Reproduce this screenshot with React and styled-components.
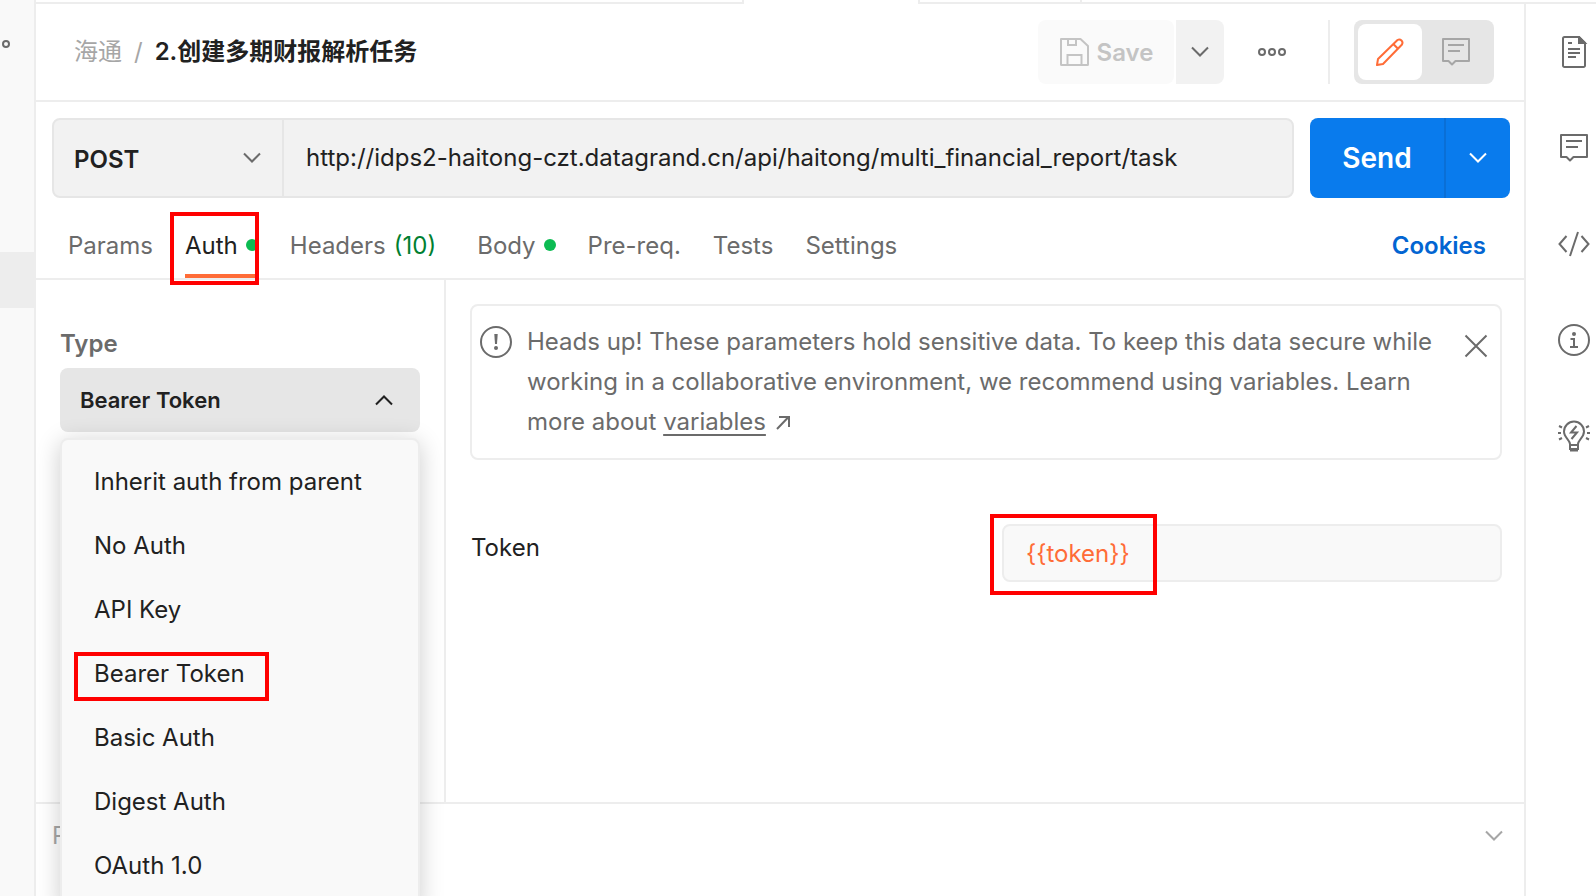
import React from 'react';
import styled, { createGlobalStyle, css } from 'styled-components';

const c = {
  text: '#212121',
  muted: '#6b6b6b',
  faint: '#a6a6a6',
  disabled: '#c4c4c4',
  line: '#ededed',
  lineStrong: '#e6e6e6',
  panel: '#f9f9f9',
  field: '#f2f2f2',
  orange: '#ff6c37',
  green: '#0cbb52',
  greenText: '#007f31',
  blue: '#097bed',
  link: '#0265d2',
  mark: '#ff0000',
};

const Global = createGlobalStyle`
  *, *::before, *::after { box-sizing: border-box; }
  body { margin: 0; background: #fff; }
  body, button, input, select {
    font-family: Inter, "Noto Sans CJK SC", "Liberation Sans", sans-serif;
    font-size: 24px;
    color: ${c.text};
  }
  button, select { cursor: pointer; }
  svg { display: block; flex: none; }
`;

const Shell = styled.div`
  display: flex;
  height: 100vh;
  overflow: hidden;
`;

const LeftRail = styled.aside`
  flex: none;
  width: 36px;
  border-right: 2px solid ${c.line};
  background: ${c.panel};
`;

const RailTop = styled.div`
  height: 252px;
  padding: 39px 1px;
  color: ${c.muted};
`;

const RailSelected = styled.div`
  height: 56px;
  background: ${c.line};
`;

const Workspace = styled.div`
  flex: 1;
  min-width: 0;
  display: flex;
  flex-direction: column;
`;

const TabStrip = styled.div`
  flex: none;
  display: flex;
  height: 4px;
`;

const StripCell = styled.div`
  ${(p) => (p.$width ? `width: ${p.$width}px;` : 'flex: 1;')}
  ${(p) => !p.$open && `border-bottom: 2px solid ${c.line};`}
  ${(p) => p.$left && `border-left: 2px solid ${c.line};`}
  ${(p) => p.$right && `border-right: 2px solid ${c.line};`}
`;

const Columns = styled.div`
  flex: 1;
  min-height: 0;
  display: flex;
`;

const Main = styled.main`
  flex: 1;
  min-width: 0;
  display: flex;
  flex-direction: column;
`;

const RightRail = styled.nav`
  flex: none;
  width: 72px;
  padding: 32px 6px 0 32px;
  border-left: 2px solid ${c.line};
  display: flex;
  flex-direction: column;
  gap: 64px;
`;

const IconButton = styled.button`
  display: flex;
  align-items: center;
  justify-content: center;
  width: 32px;
  height: 32px;
  padding: 0;
  border: 0;
  background: none;
  color: ${c.muted};
`;

const Header = styled.header`
  flex: none;
  display: flex;
  align-items: center;
  height: 98px;
  padding: 0 30px 0 38px;
  border-bottom: 2px solid ${c.line};
`;

const Crumbs = styled.h1`
  flex: 1;
  display: flex;
  gap: 12px;
  margin: 0;
  font-size: 24px;
  font-weight: 600;
  line-height: 32px;
`;

const Crumb = styled.span`
  color: ${c.faint};
  font-weight: 400;
`;

const SplitButton = styled.div`
  display: flex;
  gap: 2px;
  height: 64px;
`;

const SaveButton = styled.button`
  display: flex;
  align-items: center;
  justify-content: center;
  gap: 8px;
  width: 136px;
  padding: 0;
  border: 0;
  border-radius: 8px;
  background: #fafafa;
  color: ${c.disabled};
  font-weight: 600;
`;

const SaveMenuButton = styled.button`
  display: flex;
  align-items: center;
  justify-content: center;
  width: 48px;
  padding: 0;
  border: 0;
  border-radius: 0 8px 8px 0;
  background: ${c.field};
  color: ${c.muted};
`;

const MoreWrap = styled.div`
  display: flex;
  justify-content: center;
  width: 96px;
`;

const Divider = styled.div`
  width: 2px;
  height: 64px;
  margin: 0 24px 0 8px;
  background: ${c.line};
`;

const Toggle = styled.div`
  display: flex;
  width: 140px;
  height: 64px;
  padding: 4px;
  border-radius: 8px;
  background: ${c.lineStrong};
`;

const ToggleButton = styled.button`
  display: flex;
  align-items: center;
  justify-content: center;
  flex: 1 0 64px;
  max-width: ${(p) => (p.$active ? '64px' : 'none')};
  padding: 0;
  border: 0;
  border-radius: 8px;
  background: ${(p) => (p.$active ? '#fff' : 'transparent')};
  color: ${(p) => (p.$active ? c.orange : c.faint)};
`;

const RequestRow = styled.div`
  flex: none;
  display: flex;
  gap: 16px;
  padding: 16px 14px 14px 16px;
`;

const UrlBar = styled.div`
  flex: 1;
  display: flex;
  height: 80px;
  border: 2px solid ${c.lineStrong};
  border-radius: 8px;
  background: ${c.field};
  overflow: hidden;
`;

const MethodBox = styled.div`
  flex: none;
  display: grid;
  align-items: center;
  width: 230px;
  border-right: 2px solid ${c.lineStrong};
  color: ${c.muted};

  > * { grid-area: 1 / 1; }
  > svg { justify-self: end; margin-right: 18px; pointer-events: none; }
`;

const MethodSelect = styled.select`
  appearance: none;
  height: 100%;
  padding: 2px 20px 0;
  border: 0;
  background: none;
  font-weight: 600;
`;

const UrlInput = styled.input`
  flex: 1;
  min-width: 0;
  padding: 0 22px 2px;
  border: 0;
  background: none;
  outline: none;
`;

const SendGroup = styled.div`
  flex: none;
  display: flex;
  width: 200px;
  border-radius: 8px;
  background: ${c.blue};
  overflow: hidden;
`;

const SendButton = styled.button`
  flex: 1;
  padding: 0;
  border: 0;
  background: none;
  color: #fff;
  font-size: 28px;
  font-weight: 600;
`;

const SendMenuButton = styled.button`
  display: flex;
  align-items: center;
  justify-content: center;
  width: 66px;
  padding: 0;
  border: 0;
  border-left: 2px solid #0a6fd6;
  background: none;
  color: #fff;
`;

const Tabs = styled.nav`
  flex: none;
  display: flex;
  height: 68px;
  padding: 0 38px 0 32px;
  border-bottom: 2px solid ${c.line};
`;

const TabList = styled.div`
  flex: 1;
  display: flex;
  gap: 32px;
`;

const Tab = styled.button`
  position: relative;
  display: flex;
  align-items: center;
  gap: 8px;
  padding: 4px 0 0;
  border: 0;
  border-bottom: 4px solid ${(p) => (p.$active ? c.orange : 'transparent')};
  background: none;
  color: ${(p) => (p.$active ? c.text : c.muted)};
  white-space: nowrap;
`;

const Dot = styled.span`
  width: 12px;
  height: 12px;
  border-radius: 50%;
  background: ${c.green};
`;

const Count = styled.span`
  padding-right: 9px;
  color: ${c.greenText};
`;

const TextLink = styled.a`
  align-self: center;
  color: ${c.link};
  font-weight: 600;
  text-decoration: none;
`;

const Mark = styled.span`
  position: absolute;
  z-index: 3;
  border: 4px solid ${c.mark};
  pointer-events: none;
  ${(p) => p.$kind === 'tab' && css`inset: 0 -1px -11px -15px;`}
  ${(p) => p.$kind === 'option' && css`top: 10px; left: 12px; width: 195px; height: 49px;`}
  ${(p) => p.$kind === 'field' && css`top: -10px; left: -12px; width: 167px; height: 81px;`}
`;

const AuthArea = styled.section`
  flex: 1;
  min-height: 0;
  display: flex;
`;

const TypePane = styled.div`
  flex: none;
  width: 410px;
  padding: 48px 24px 0;
  border-right: 2px solid ${c.line};
`;

const TypeLabel = styled.div`
  height: 40px;
  color: ${c.muted};
  font-weight: 600;
  line-height: 32px;
`;

const Picker = styled.div`
  position: relative;
`;

const PickerButton = styled.button`
  display: flex;
  align-items: center;
  justify-content: space-between;
  width: 100%;
  height: 64px;
  padding: 0 24px 0 20px;
  border: 0;
  border-radius: 8px;
  background: ${c.lineStrong};
  font-size: 22px;
  font-weight: 600;
`;

const Menu = styled.ul`
  position: absolute;
  top: 70px;
  left: 0;
  right: 0;
  z-index: 2;
  margin: 0;
  padding: 10px 0;
  border: 2px solid ${c.line};
  border-radius: 8px;
  background: ${c.panel};
  box-shadow: 0 4px 24px rgba(0, 0, 0, 0.2);
  list-style: none;
`;

const Option = styled.li`
  position: relative;
  height: 64px;
  padding: 0 32px;
  line-height: 64px;
`;

const DetailPane = styled.div`
  flex: 1;
  min-width: 0;
  padding: 24px 22px 0 24px;
`;

const Notice = styled.div`
  display: flex;
  padding: 16px 8px 16px;
  border: 2px solid ${c.line};
  border-radius: 8px;
  color: ${c.muted};
  line-height: 40px;

  > svg { margin-top: 4px; }
  > button { margin-top: 8px; }
`;

const NoticeText = styled.p`
  flex: 1;
  margin: 0 19px 0 15px;
`;

const VariablesLink = styled.a`
  color: inherit;
  text-decoration: underline;
  text-decoration-thickness: 2px;
  text-decoration-skip-ink: none;
  text-underline-offset: 4px;
`;

const InlineArrow = styled.svg`
  && { display: inline-block; margin-left: 10px; }
`;

const TokenRow = styled.div`
  display: grid;
  grid-template-columns: 1fr 1fr;
  gap: 32px;
  margin-top: 64px;
`;

const TokenLabel = styled.label`
  padding-left: 1px;
  line-height: 48px;
`;

const TokenField = styled.div`
  position: relative;
`;

const TokenInput = styled.input`
  display: block;
  width: 100%;
  height: 58px;
  padding: 0 22px;
  border: 2px solid ${c.line};
  border-radius: 8px;
  background: ${c.panel};
  color: ${c.orange};
  outline: none;
`;

const ResponseBar = styled.footer`
  flex: none;
  display: flex;
  align-items: flex-start;
  justify-content: space-between;
  height: 94px;
  padding: 16px 18px 0 16px;
  border-top: 2px solid ${c.line};
  color: ${c.faint};
  line-height: 32px;

  > svg { margin-top: 4px; }
`;

const Svg = ({ size = 32, children }) => (
  <svg width={size} height={size} viewBox={`0 0 ${size} ${size}`} fill="none" stroke="currentColor" strokeWidth="2" aria-hidden="true">
    {children}
  </svg>
);

const Chevron = ({ up }) => (
  <Svg size={24}><path d={up ? 'M4 16.5 12 8.5l8 8' : 'M4 7.5l8 8 8-8'} /></Svg>
);

const SaveIcon = () => (
  <Svg size={30}>
    <path d="M2 2h19.500L29 9v18.500a.5.5 0 0 1-.5.5h-26a.5.5 0 0 1-.5-.5z" strokeLinejoin="round" />
    <path d="M9 2v6h8V2M8.500 28V18h14v10" />
  </Svg>
);

const PencilIcon = () => (
  <Svg>
    <path d="M3 29 4 23 23.500 4a3.300 3.300 0 0 1 4.500 4.500L9 28z" strokeLinejoin="round" />
    <path d="M19.300 8l5 5" />
  </Svg>
);

const CommentIcon = () => (
  <Svg>
    <path d="M3 3h26v22H15.500L12 28.500 8.500 25H3z" strokeLinejoin="round" />
    <path d="M8 9h16M8 15h12" />
  </Svg>
);

const DocIcon = () => (
  <Svg>
    <path d="M6.500 1H21l6 6v22.500a1.500 1.500 0 0 1-1.500 1.500h-19A1.500 1.500 0 0 1 5 29.500v-27A1.500 1.500 0 0 1 6.500 1z" />
    <path d="M21 1v6h6z" fill="currentColor" />
    <path d="M10 7h4M10 13h12M10 17h12M10 21h8" />
  </Svg>
);

const CodeIcon = () => (
  <Svg>
    <path d="M8.500 8 1.500 16l7 8M23.500 8l7 8-7 8M20 4l-8 24" />
  </Svg>
);

const InfoIcon = () => (
  <Svg>
    <circle cx="16" cy="16" r="15" />
    <circle cx="16" cy="10" r="2" fill="currentColor" stroke="none" />
    <path d="M12.500 15H16v8M12 23h8" />
  </Svg>
);

const BulbIcon = () => (
  <Svg>
    <path d="M12 29v-5C12 20 6 17.500 6 11.500a10 10 0 0 1 20 0c0 6-6 8.500-6 12.500v5zM12 25h8" />
    <path d="M12 30.500h8M0 13h3M29 13h3M1 6l3 1.500M31 6l-3 1.500M1 19.500 4 18M31 19.500 28 18" />
    <path d="M18.500 6 13 12.500h6L13.500 19" />
  </Svg>
);

const AlertIcon = () => (
  <Svg>
    <circle cx="16" cy="16" r="15" />
    <path d="M14.300 8h3.400l-.7 10h-2z" fill="currentColor" stroke="none" />
    <circle cx="16" cy="22" r="2" fill="currentColor" stroke="none" />
  </Svg>
);

const authTypes = [
  'Inherit auth from parent',
  'No Auth',
  'API Key',
  'Bearer Token',
  'Basic Auth',
  'Digest Auth',
  'OAuth 1.0',
];

const railItems = [
  ['Documentation', DocIcon],
  ['Comments', CommentIcon],
  ['Code', CodeIcon],
  ['Info', InfoIcon],
  ['Related requests', BulbIcon],
];

export default function App() {
  return (
    <>
      <Global />
      <Shell>
        <LeftRail>
          <RailTop>
            <Svg size={10}><circle cx="5" cy="5" r="3" /></Svg>
          </RailTop>
          <RailSelected />
        </LeftRail>
        <Workspace>
          <TabStrip>
            <StripCell $width={708} $right />
            <StripCell $width={174} $open />
            <StripCell $width={164} $left $right />
            <StripCell />
          </TabStrip>
          <Columns>
            <Main>
              <Header>
                <Crumbs>
                  <Crumb>海通</Crumb>
                  <Crumb>/</Crumb>
                  <span>2.创建多期财报解析任务</span>
                </Crumbs>
                <SplitButton>
                  <SaveButton type="button"><SaveIcon />Save</SaveButton>
                  <SaveMenuButton type="button" aria-label="Save options"><Chevron /></SaveMenuButton>
                </SplitButton>
                <MoreWrap>
                  <IconButton type="button" aria-label="More actions">
                    <Svg><circle cx="6" cy="16" r="3" /><circle cx="16" cy="16" r="3" /><circle cx="26" cy="16" r="3" /></Svg>
                  </IconButton>
                </MoreWrap>
                <Divider />
                <Toggle>
                  <ToggleButton type="button" $active aria-label="Edit"><PencilIcon /></ToggleButton>
                  <ToggleButton type="button" aria-label="Comment"><CommentIcon /></ToggleButton>
                </Toggle>
              </Header>

              <RequestRow>
                <UrlBar>
                  <MethodBox>
                    <MethodSelect aria-label="Method" defaultValue="POST">
                      <option>GET</option>
                      <option>POST</option>
                    </MethodSelect>
                    <Chevron />
                  </MethodBox>
                  <UrlInput
                    aria-label="Request URL"
                    defaultValue="http://idps2-haitong-czt.datagrand.cn/api/haitong/multi_financial_report/task"
                  />
                </UrlBar>
                <SendGroup>
                  <SendButton type="button">Send</SendButton>
                  <SendMenuButton type="button" aria-label="Send options"><Chevron /></SendMenuButton>
                </SendGroup>
              </RequestRow>

              <Tabs>
                <TabList>
                  <Tab type="button">Params</Tab>
                  <Tab type="button" $active>Auth<Dot /><Mark $kind="tab" /></Tab>
                  <Tab type="button">Headers <Count>(10)</Count></Tab>
                  <Tab type="button">Body<Dot /></Tab>
                  <Tab type="button">Pre-req.</Tab>
                  <Tab type="button">Tests</Tab>
                  <Tab type="button">Settings</Tab>
                </TabList>
                <TextLink href="#cookies">Cookies</TextLink>
              </Tabs>

              <AuthArea>
                <TypePane>
                  <TypeLabel id="auth-type">Type</TypeLabel>
                  <Picker>
                    <PickerButton type="button" aria-haspopup="listbox" aria-expanded="true" aria-describedby="auth-type">
                      Bearer Token
                      <Chevron up />
                    </PickerButton>
                    <Menu role="listbox" aria-labelledby="auth-type">
                      {authTypes.map((t) => (
                        <Option key={t} role="option" aria-selected={t === 'Bearer Token'}>
                          {t}
                          {t === 'Bearer Token' && <Mark $kind="option" />}
                        </Option>
                      ))}
                    </Menu>
                  </Picker>
                </TypePane>
                <DetailPane>
                  <Notice>
                    <AlertIcon />
                    <NoticeText>
                      Heads up! These parameters hold sensitive data. To keep this data secure while working in a
                      collaborative environment, we recommend using variables. Learn more about{' '}
                      <VariablesLink href="#variables">variables</VariablesLink>
                      <InlineArrow width="14" height="15" viewBox="0 0 14 15" fill="none" stroke="currentColor" strokeWidth="2" aria-hidden="true">
                        <path d="M1 14 12.500 2M3 2h10v10" />
                      </InlineArrow>
                    </NoticeText>
                    <IconButton type="button" aria-label="Dismiss">
                      <Svg><path d="M5.500 5.500l21 21M26.500 5.500l-21 21" /></Svg>
                    </IconButton>
                  </Notice>
                  <TokenRow>
                    <TokenLabel htmlFor="token">Token</TokenLabel>
                    <TokenField>
                      <TokenInput id="token" defaultValue="{{token}}" />
                      <Mark $kind="field" />
                    </TokenField>
                  </TokenRow>
                </DetailPane>
              </AuthArea>

              <ResponseBar>
                <span>Response</span>
                <Chevron />
              </ResponseBar>
            </Main>
            <RightRail aria-label="Request tools">
              {railItems.map(([label, Icon]) => (
                <IconButton key={label} type="button" aria-label={label}><Icon /></IconButton>
              ))}
            </RightRail>
          </Columns>
        </Workspace>
      </Shell>
    </>
  );
}
